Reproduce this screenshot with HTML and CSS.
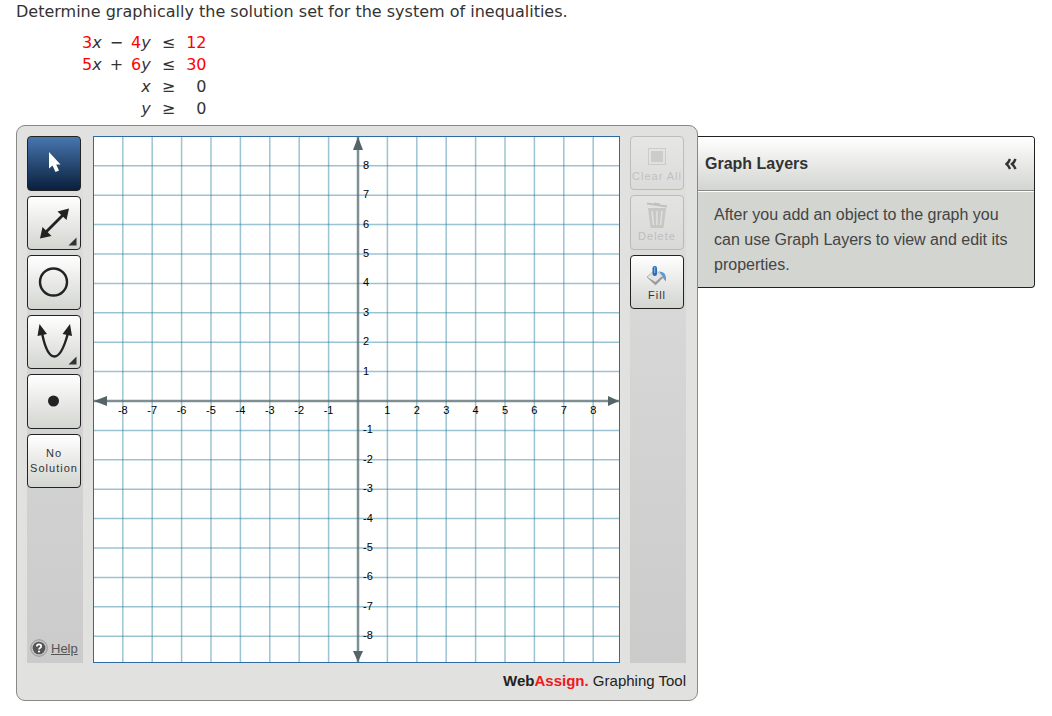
FILE: index.html
```html
<!DOCTYPE html>
<html lang="en">
<head>
    <meta charset="UTF-8">
    <meta name="viewport" content="width=device-width, initial-scale=1.0">
    <title>System of Inequalities</title>
    <link rel="stylesheet" href="styles.css">
</head>
<body>
    <p class="question">Determine graphically the solution set for the system of inequalities.</p>
    <table class="system">
        <tr>
            <td class="lhs"><span class="num">3</span><i>x</i><span class="op">−</span><span class="num">4</span><i>y</i></td>
            <td class="rel">≤</td>
            <td class="rhs num">12</td>
        </tr>
        <tr>
            <td class="lhs"><span class="num">5</span><i>x</i><span class="op">+</span><span class="num">6</span><i>y</i></td>
            <td class="rel">≤</td>
            <td class="rhs num">30</td>
        </tr>
        <tr>
            <td class="lhs"><i>x</i></td>
            <td class="rel">≥</td>
            <td class="rhs">0</td>
        </tr>
        <tr>
            <td class="lhs"><i>y</i></td>
            <td class="rel">≥</td>
            <td class="rhs">0</td>
        </tr>
    </table>

    <div class="tool-row">
        <div class="graph-tool">
            <div class="tool-main">
                <div class="toolbar">
                    <div class="tool-buttons">
                        <button class="tool-btn active" aria-label="Select">
                            <svg width="52" height="52" viewBox="0 0 52 52">
                                <path d="M21 15 L21 31.500 L24.500 28.500 L27.500 35 L31 33.500 L28.200 27.500 L32.500 27.500 Z" fill="#fff"/>
                            </svg>
                        </button>
                        <button class="tool-btn" aria-label="Line">
                            <svg width="52" height="52" viewBox="0 0 52 52">
                                <path d="M17 36 L36 17" stroke="#222" stroke-width="2.800"/>
                                <path d="M41 11.500 L38.500 23 L29.500 14.500 Z M12 41.500 L14.500 30 L23.500 39 Z" fill="#222"/>
                                <path class="corner" d="M48.500 40.500 V48.500 H40.500 Z"/>
                            </svg>
                        </button>
                        <button class="tool-btn" aria-label="Circle">
                            <svg width="52" height="52" viewBox="0 0 52 52">
                                <circle cx="25.500" cy="26" r="13.500" fill="none" stroke="#222" stroke-width="2.400"/>
                            </svg>
                        </button>
                        <button class="tool-btn" aria-label="Parabola">
                            <svg width="52" height="52" viewBox="0 0 52 52">
                                <path d="M14 17 C17 32 21 40.500 26.500 40.500 S36 32 40 17" fill="none" stroke="#222" stroke-width="2.400"/>
                                <path d="M11.500 8 L19 18 L9.500 20 Z M42 8 L44 20 L34.500 18 Z" fill="#222"/>
                                <path class="corner" d="M48.500 40.500 V48.500 H40.500 Z"/>
                            </svg>
                        </button>
                        <button class="tool-btn" aria-label="Point">
                            <svg width="52" height="52" viewBox="0 0 52 52">
                                <circle cx="25.500" cy="26" r="5.500" fill="#222"/>
                            </svg>
                        </button>
                        <button class="tool-btn">No<br>Solution</button>
                    </div>
                    <a class="help" href="#">
                        <svg width="18" height="18" viewBox="0 0 18 18">
                            <circle cx="9" cy="9" r="8.300" fill="#c4c4c4" stroke="#8c8c8c" stroke-width="0.800"/>
                            <circle cx="9" cy="9" r="6.300" fill="#555"/>
                            <path d="M6.800 7.400 Q6.800 5.300 9 5.300 T11.200 7.200 Q11.200 8.300 10 8.900 Q9 9.400 9 10.400" fill="none" stroke="#fff" stroke-width="1.700"/>
                            <circle cx="9" cy="12.500" r="1.100" fill="#fff"/>
                        </svg>
                        <span>Help</span>
                    </a>
                </div>

                <div class="graph">
                    <svg id="plot" width="525" height="525" viewBox="0 0 525 525"></svg>
                </div>

                <div class="toolbar">
                    <div class="tool-buttons actions">
                        <button class="tool-btn action" disabled>
                            <svg width="24" height="24" viewBox="0 0 24 24">
                                <rect x="3.500" y="4.500" width="17" height="16" fill="none" stroke="#777"/>
                                <rect x="6" y="7" width="12" height="11" fill="#777"/>
                            </svg>
                            <span>Clear All</span>
                        </button>
                        <button class="tool-btn action" disabled>
                            <svg width="24" height="26" viewBox="0 0 24 26">
                                <path d="M2 1.500 L22 4.500 M9 1.500 L15 2.500" stroke="#444" stroke-width="2"/>
                                <path d="M3 6 H21 L18.500 26 H5.500 Z" fill="#666"/>
                                <path d="M7 9 L8.500 23 M12 9 V23 M17 9 L15.500 23" stroke="#eee" stroke-width="1.600"/>
                            </svg>
                            <span>Delete</span>
                        </button>
                        <button class="tool-btn action">
                            <svg width="24" height="24" viewBox="0 0 24 24">
                                <path d="M10 7 L19 13.500 L10.500 22 L2 14 Z" fill="#e4e4e4" stroke="#aaa" stroke-width="0.800"/>
                                <path d="M2 14 L10.500 22 L19 13.500 L16.500 13.500 L10.500 19 Z" fill="#999"/>
                                <path d="M14 8.500 Q22 8 21 18.500 Q18 16 17.500 13 Z" fill="#5b9bd0"/>
                                <rect x="7.500" y="3" width="4.500" height="10" rx="2.200" fill="#2f6cb5"/>
                                <path d="M9.700 4 V10" stroke="#8fc0ee"/>
                            </svg>
                            <span>Fill</span>
                        </button>
                    </div>
                </div>
            </div>
            <div class="brand"><b>Web<span>Assign.</span></b> Graphing Tool</div>
        </div>

        <div class="layers">
            <div class="layers-header">
                <h2>Graph Layers</h2>
                <button class="collapse" aria-label="Collapse">
                    <svg width="12" height="12" viewBox="0 0 12 12">
                        <path d="M5 1 Q4 4 1.500 6 Q4 8 5 11 M10.500 1 Q9.500 4 7 6 Q9.500 8 10.500 11" fill="none" stroke="#333" stroke-width="2.400"/>
                    </svg>
                </button>
            </div>
            <p>After you add an object to the graph you can use Graph Layers to view and edit its properties.</p>
        </div>
    </div>

    <script src="graph.js"></script>
</body>
</html>
```
FILE: styles.css
```css
body {
    margin: 0;
    padding: 0 16px;
    background-color: #fff;
    color: #333;
    font-family: Verdana, "DejaVu Sans", sans-serif;
    font-size: 16px;
}
.question {
    margin: 0;
    line-height: 24px;
}
.system {
    margin: 8px 0 5px 66px;
    border-collapse: collapse;
}
.system td {
    padding: 0;
    line-height: 22px;
    height: 22px;
    white-space: nowrap;
}
.system .lhs, .system .rhs {
    text-align: right;
}
.system .op {
    margin: 0 8px;
}
.system .rel {
    padding: 0 11px;
}
.num {
    color: #f00;
}
.tool-row {
    display: flex;
    align-items: flex-start;
    font-family: Arial, "Liberation Sans", sans-serif;
}
.graph-tool {
    flex: none;
    padding: 10px 11px 9px 10px;
    background-color: #e1e1df;
    border: 1px solid #888;
    border-radius: 9px;
}
.tool-main {
    display: flex;
    gap: 10px;
}
.toolbar {
    display: flex;
    flex-direction: column;
    justify-content: space-between;
    width: 56px;
    background: linear-gradient(#e1e1df, #d6d6d6 40%, #cbcbcb);
}
.tool-buttons {
    display: grid;
    grid-auto-rows: 1fr;
    gap: 5px;
    width: 54px;
    height: 352px;
}
.tool-buttons.actions {
    height: 173px;
}
.tool-btn {
    display: flex;
    flex-direction: column;
    align-items: center;
    justify-content: center;
    min-width: 0;
    padding: 0;
    border: 1px solid #222;
    border-radius: 4px;
    background: linear-gradient(#fff, #d3d5d0);
    color: #333;
    font-family: Arial, "Liberation Sans", sans-serif;
    font-size: 11px;
    line-height: 15px;
    letter-spacing: 1px;
    text-align: center;
    white-space: nowrap;
    cursor: pointer;
}
.tool-btn.active {
    background: linear-gradient(#4776ae, #0a1f3d);
}
.tool-btn:disabled {
    opacity: 0.18;
    cursor: default;
}
.tool-btn.action {
    justify-content: flex-end;
    gap: 1px;
    padding-bottom: 5px;
}
.corner {
    fill: #333;
}
.help {
    display: flex;
    align-items: center;
    gap: 3px;
    padding: 0 0 6px 3px;
    color: #555;
    font-size: 13px;
}
.graph {
    border: 1px solid #2e6aa3;
    background-color: #fff;
}
.graph svg {
    display: block;
}
.grid-line {
    stroke: #247a9c;
    stroke-opacity: 0.45;
    stroke-width: 1.5;
}
.axis {
    stroke: #546a70;
    stroke-opacity: 0.75;
    stroke-width: 2.5;
}
.arrow {
    fill: #546468;
}
.tick {
    fill: #000;
    font-size: 11px;
}
.brand {
    margin-top: 8px;
    color: #222;
    font-size: 15px;
    line-height: 20px;
    text-align: right;
}
.brand span {
    color: #f01820;
}
.layers {
    flex: 1;
    margin: 11px 1px 0 0;
    border: 1px solid #222;
    border-left: none;
    border-radius: 0 4px 4px 0;
    background-color: #d3d5d0;
    overflow: hidden;
}
.layers-header {
    display: flex;
    align-items: center;
    justify-content: space-between;
    height: 53px;
    padding: 0 17px 0 7px;
    border-bottom: 1px solid #888;
    background: linear-gradient(#fff, #d3d5d0);
}
.layers-header h2 {
    margin: 0;
    font-size: 16px;
}
.collapse {
    display: flex;
    padding: 0;
    border: none;
    background: none;
    cursor: pointer;
}
.layers p {
    margin: 0;
    padding: 10px 16px 10px;
    border-top: 1px solid #fff;
    color: #444;
    font-size: 16px;
    line-height: 25px;
}
```
FILE: graph.js
```js
const plot = document.getElementById('plot');
const size = 525;
const origin = 264;
const step = 29.4;

function line(x1, y1, x2, y2, cls) {
    return `<line class="${cls}" x1="${x1}" y1="${y1}" x2="${x2}" y2="${y2}"/>`;
}

let lines = '';
let labels = '';
for (let i = -8; i <= 8; i++) {
    if (i === 0) continue;
    const x = origin + i * step;
    const y = origin - i * step;
    lines += line(x, 0, x, size, 'grid-line');
    lines += line(0, y, size, y, 'grid-line');
    labels += `<text class="tick" x="${x}" y="${origin + 13}" text-anchor="middle">${i}</text>`;
    labels += `<text class="tick" x="${origin + 5}" y="${y + 3}">${i}</text>`;
}

// axes with arrow heads at both ends
lines += line(origin, 0, origin, size, 'axis');
lines += line(0, origin, size, origin, 'axis');
lines += `<path class="arrow" d="M${origin} 0 l5 13 h-10 Z M${origin} ${size} l5 -11 h-10 Z"/>`;
lines += `<path class="arrow" d="M0 ${origin} l13 -5 v10 Z M${size} ${origin} l-11 -5 v10 Z"/>`;

plot.innerHTML = lines + labels;
```
